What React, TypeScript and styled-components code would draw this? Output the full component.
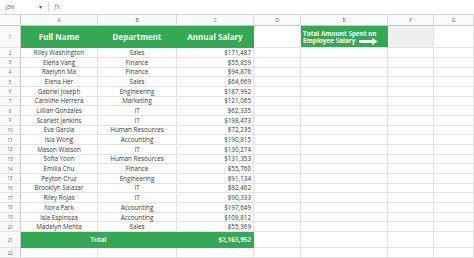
import * as React from 'react'
import styled, { createGlobalStyle, css } from 'styled-components'

type Row = { name: string; dept: string; salary: string }

const rows: Row[] = [
  { name: 'Riley Washington', dept: 'Sales', salary: '$171,487' },
  { name: 'Elena Vang', dept: 'Finance', salary: '$55,859' },
  { name: 'Raelynn Ma', dept: 'Finance', salary: '$94,876' },
  { name: 'Elena Her', dept: 'Sales', salary: '$64,669' },
  { name: 'Gabriel Joseph', dept: 'Engineering', salary: '$187,992' },
  { name: 'Caroline Herrera', dept: 'Marketing', salary: '$121,065' },
  { name: 'Lillian Gonzales', dept: 'IT', salary: '$62,335' },
  { name: 'Scarlett Jenkins', dept: 'IT', salary: '$198,473' },
  { name: 'Eva Garcia', dept: 'Human Resources', salary: '$72,235' },
  { name: 'Isla Wong', dept: 'Accounting', salary: '$190,815' },
  { name: 'Mason Watson', dept: 'IT', salary: '$130,274' },
  { name: 'Sofia Yoon', dept: 'Human Resources', salary: '$131,353' },
  { name: 'Emilia Chu', dept: 'Finance', salary: '$55,760' },
  { name: 'Peyton Cruz', dept: 'Engineering', salary: '$91,134' },
  { name: 'Brooklyn Salazar', dept: 'IT', salary: '$82,462' },
  { name: 'Riley Rojas', dept: 'IT', salary: '$90,333' },
  { name: 'Nora Park', dept: 'Accounting', salary: '$197,649' },
  { name: 'Isla Espinoza', dept: 'Accounting', salary: '$109,812' },
  { name: 'Madelyn Mehta', dept: 'Sales', salary: '$55,369' },
]

const letters = ['A', 'B', 'C', 'D', 'E', 'F', 'G']
const GREEN = '#34a853'

const GlobalStyle = createGlobalStyle`
  html, body { margin: 0; padding: 0; background: #fff; }
  body { font-family: "Open Sans", "DejaVu Sans", sans-serif; overflow: hidden; }
  * { box-sizing: border-box; }
`

export default function App() {
  return (
    <>
      <GlobalStyle />
      <Page>
        <FormulaBar>
          <NameBox>J36</NameBox>
          <Caret>▾</Caret>
          <Divider />
          <Fx>fx</Fx>
        </FormulaBar>
        <Sheet>
          <Corner />
          {letters.map((l) => (
            <ColHead key={l}>{l}</ColHead>
          ))}

          <RowHead>1</RowHead>
          <Cell green bold size={8}>Full Name</Cell>
          <Cell green bold size={8}>Department</Cell>
          <Cell green bold size={8}>Annual Salary</Cell>
          <Cell />
          <NoteCell>
            <span>Total Amount Spent on</span>
            <NoteLine>
              Employee Salary
              <Arrow />
            </NoteLine>
          </NoteCell>
          <Cell shaded />
          <Cell />

          {rows.map((r, i) => (
            <React.Fragment key={r.name + i}>
              <RowHead>{i + 2}</RowHead>
              <Cell>{r.name}</Cell>
              <Cell>{r.dept}</Cell>
              <Cell align="right">{r.salary}</Cell>
              <Cell />
              <Cell />
              <Cell />
              <Cell />
            </React.Fragment>
          ))}

          <RowHead>21</RowHead>
          <Cell green bold span={2}>Total</Cell>
          <Cell green bold align="right">$2,163,952</Cell>
          <Cell />
          <Cell />
          <Cell />
          <Cell />

          <RowHead>22</RowHead>
          <Cell />
          <Cell />
          <Cell />
          <Cell />
          <Cell />
          <Cell />
          <Cell />
        </Sheet>
      </Page>
    </>
  )
}

const Arrow = () => (
  <svg width="19" height="7" viewBox="0 0 19 7">
    <path d="M0 2 H13 V0 L19 3.5 L13 7 V5 H0 Z" fill="#fff" />
  </svg>
)

const Page = styled.div`
  width: 474px;
  height: 258px;
  display: flex;
  flex-direction: column;
  overflow: hidden;
`

const FormulaBar = styled.div`
  height: 16px;
  display: flex;
  align-items: center;
  padding-left: 6px;
  color: #555;
  font-size: 6px;
`

const NameBox = styled.span`
  width: 33px;
  color: #444;
`

const Caret = styled.span`
  font-size: 6px;
  color: #555;
`

const Divider = styled.div`
  width: 1px;
  height: 10px;
  background: #ddd;
  margin: 0 5px 0 6px;
`

const Fx = styled.span`
  font-family: "DejaVu Serif", serif;
  font-style: italic;
  color: #888;
  font-size: 7px;
`

const Sheet = styled.div`
  flex: 1;
  display: grid;
  grid-template-columns: 21px 77px 79px 77px 47px 87px 46px 1fr;
  grid-template-rows: 11px 22px repeat(19, 9.684px) 16px 10px;
  border-top: 1px solid #d5d5d5;
`

const Corner = styled.div`
  background: #f8f9fa;
  border-right: 1px solid #c9c9c9;
  border-bottom: 1px solid #c9c9c9;
`

const ColHead = styled.div`
  background: #f8f9fa;
  border-right: 1px solid #dcdcdc;
  border-bottom: 1px solid #c9c9c9;
  color: #666;
  font-size: 5px;
  display: flex;
  align-items: center;
  justify-content: center;
`

const RowHead = styled.div`
  background: #f8f9fa;
  border-right: 1px solid #c9c9c9;
  border-bottom: 1px solid #e3e3e3;
  color: #666;
  font-size: 4.5px;
  display: flex;
  align-items: center;
  justify-content: center;
`

type CellProps = {
  green?: boolean
  bold?: boolean
  shaded?: boolean
  align?: 'center' | 'right'
  span?: number
  size?: number
}

const Cell = styled.div.withConfig({
  shouldForwardProp: (p) => !['green', 'bold', 'shaded', 'align', 'span', 'size'].includes(p),
})<CellProps>`
  display: flex;
  align-items: center;
  justify-content: ${(p) => (p.align === 'right' ? 'flex-end' : 'center')};
  padding: 0 2px;
  border-right: 1px solid #e3e3e3;
  border-bottom: 1px solid #e3e3e3;
  font-size: ${(p) => p.size ?? 6.3}px;
  color: #3a3a3a;
  white-space: nowrap;
  ${(p) => p.span && css`grid-column: span ${p.span};`}
  ${(p) => p.bold && css`font-weight: 700;`}
  ${(p) => p.shaded && css`background: #efefef;`}
  ${(p) =>
    p.green &&
    css`
      background: ${GREEN};
      color: #fff;
      border-color: ${GREEN};
    `}
`

const NoteCell = styled.div`
  background: ${GREEN};
  color: #fff;
  font-weight: 700;
  font-size: 6.4px;
  line-height: 7.6px;
  padding: 1px 2px 0 2px;
  display: flex;
  flex-direction: column;
  justify-content: center;
  border-right: 1px solid ${GREEN};
  border-bottom: 1px solid #e3e3e3;
  white-space: nowrap;
`

const NoteLine = styled.span`
  display: flex;
  align-items: center;
  gap: 4px;
`
